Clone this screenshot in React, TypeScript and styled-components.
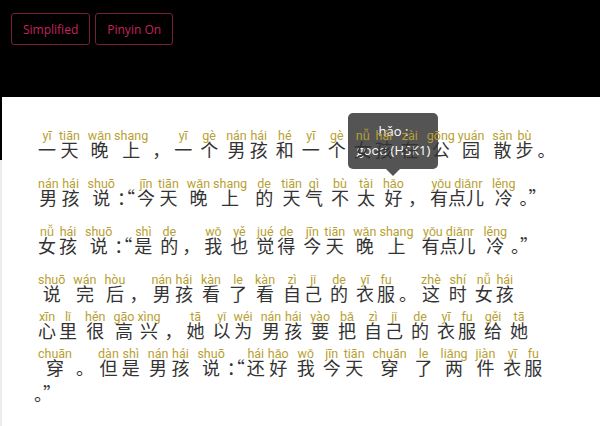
import React from "react";
import styled, { createGlobalStyle } from "styled-components";

const GlobalStyle = createGlobalStyle`
  html, body {
    margin: 0;
    padding: 0;
  }
  body {
    background: #000;
    overflow: hidden;
    font-family: "Noto Sans", sans-serif;
  }
`;

const Page = styled.div`
  width: 600px;
  height: 426px;
  display: flex;
  flex-direction: column;
  background: linear-gradient(to bottom, #000 0, #000 160px, #ececec 160px);
`;

const Header = styled.div`
  height: 97px;
  box-sizing: border-box;
  padding: 13px 11px;
  display: flex;
  align-items: flex-start;
  gap: 5px;
  background: #000;
`;

const ToggleButton = styled.button`
  height: 32px;
  padding: 0 11px;
  background: transparent;
  border: 1px solid #7a1c3c;
  border-radius: 3px;
  color: #c8225c;
  font-family: "Open Sans", "Noto Sans", sans-serif;
  font-size: 12px;
  cursor: pointer;
`;

const Reader = styled.div`
  flex: 1;
  margin-left: 2px;
  background: #fff;
  padding: 32px 20px 0 32px;
`;

const Paragraph = styled.div`
  display: flex;
  flex-wrap: wrap;
  align-items: flex-end;
  margin-bottom: 11px;
`;

const LineBreak = styled.span`
  flex-basis: 100%;
  height: 0;
`;

const Word = styled.span`
  display: inline-flex;
  gap: 3px;
  margin: 0 4px;
`;

const Syllable = styled.span`
  position: relative;
  display: inline-flex;
  flex-direction: column;
  align-items: center;
  min-width: 18px;
  padding-bottom: 8px;
`;

const Pinyin = styled.span`
  position: relative;
  z-index: 1;
  font-family: Roboto, "Liberation Sans", sans-serif;
  font-size: 12.5px;
  line-height: 13px;
  color: #b89f33;
  white-space: nowrap;
`;

const Hanzi = styled.span`
  position: relative;
  z-index: 1;
  margin-top: -2px;
  font-family: "Noto Sans CJK SC", sans-serif;
  font-size: 18px;
  line-height: 18px;
  color: #333;
  white-space: nowrap;
`;

const Punct = styled(Hanzi)<{ $narrow?: boolean }>`
  margin: 0 ${(p) => (p.$narrow ? "-2px" : "0")} 8px;
  font-feature-settings: ${(p) => (p.$narrow ? '"halt"' : "normal")};
`;

const Tooltip = styled.span`
  position: absolute;
  z-index: 0;
  bottom: calc(100% + 8px);
  left: 50%;
  transform: translateX(-50%);
  width: 90px;
  box-sizing: border-box;
  padding: 9px 0;
  background: #545454;
  border-radius: 5px;
  color: #fff;
  font-family: "Open Sans", "Noto Sans", sans-serif;
  font-size: 13px;
  line-height: 19px;
  text-align: center;

  &::after {
    content: "";
    position: absolute;
    top: 100%;
    left: 50%;
    margin-left: -7px;
    border-left: 7px solid transparent;
    border-right: 7px solid transparent;
    border-top: 7px solid #545454;
  }
`;

type Token = string | { hz: string; py: string; tip?: string };

const w = (hz: string, py: string, tip?: string): Token => ({ hz, py, tip });

// "\n" marks where the reference wraps a long paragraph
const paragraphs: Token[][] = [
  [
    w("一天", "yī tiān"), w("晚上", "wǎn shang"), "，", w("一", "yī"), w("个", "gè"),
    w("男孩", "nán hái"), w("和", "hé"), w("一", "yī"), w("个", "gè"), w("女孩", "nǚ hái"),
    w("在", "zài"), w("公园", "gōng yuán"), w("散步", "sàn bù"), "。",
  ],
  [
    w("男孩", "nán hái"), w("说", "shuō"), "：“", w("今天", "jīn tiān"), w("晚上", "wǎn shang"),
    w("的", "de"), w("天气", "tiān qì"), w("不", "bù"), w("太", "tài"),
    w("好", "hǎo", "good (HSK1)"), "，", w("有点儿", "yǒu diǎnr"), w("冷", "lěng"), "。”",
  ],
  [
    w("女孩", "nǚ hái"), w("说", "shuō"), "：“", w("是", "shì"), w("的", "de"), "，",
    w("我", "wǒ"), w("也", "yě"), w("觉得", "jué de"), w("今天", "jīn tiān"), w("晚上", "wǎn shang"),
    w("有点儿", "yǒu diǎnr"), w("冷", "lěng"), "。”",
  ],
  [
    w("说", "shuō"), w("完", "wán"), w("后", "hòu"), "，", w("男孩", "nán hái"), w("看", "kàn"),
    w("了", "le"), w("看", "kàn"), w("自己", "zì jǐ"), w("的", "de"), w("衣服", "yī fu"), "。",
    w("这", "zhè"), w("时", "shí"), w("女孩", "nǚ hái"), "\n", w("心里", "xīn lǐ"), w("很", "hěn"),
    w("高兴", "gāo xìng"), "，", w("她", "tā"), w("以为", "yǐ wéi"), w("男孩", "nán hái"),
    w("要", "yào"), w("把", "bǎ"), w("自己", "zì jǐ"), w("的", "de"), w("衣服", "yī fu"),
    w("给", "gěi"), w("她", "tā"), "\n", w("穿", "chuān"), "。", w("但是", "dàn shì"),
    w("男孩", "nán hái"), w("说", "shuō"), "：“", w("还好", "hái hǎo"), w("我", "wǒ"),
    w("今天", "jīn tiān"), w("穿", "chuān"), w("了", "le"), w("两", "liǎng"), w("件", "jiàn"),
    w("衣服", "yī fu"), "\n", "。”",
  ],
];

function WordView({ hz, py, tip }: { hz: string; py: string; tip?: string }) {
  const syllables = py.split(" ");
  const chars = Array.from(hz);
  // one column per character when the syllables line up, else the whole word
  const columns =
    syllables.length === chars.length
      ? chars.map((c, i) => ({ c, p: syllables[i] }))
      : [{ c: hz, p: py }];

  return (
    <Word>
      {columns.map((col, i) => (
        <Syllable key={i}>
          {tip && (
            <Tooltip>
              {py} :
              <br />
              {tip}
            </Tooltip>
          )}
          <Pinyin>{col.p}</Pinyin>
          <Hanzi>{col.c}</Hanzi>
        </Syllable>
      ))}
    </Word>
  );
}

export default function App() {
  return (
    <>
      <GlobalStyle />
      <Page>
        <Header>
          <ToggleButton>Simplified</ToggleButton>
          <ToggleButton>Pinyin On</ToggleButton>
        </Header>
        <Reader>
          {paragraphs.map((tokens, pi) => (
            <Paragraph key={pi}>
              {tokens.map((t, ti) => {
                if (t === "\n") return <LineBreak key={ti} />;
                if (typeof t === "string")
                  return (
                    <Punct key={ti} $narrow={t === "：“"}>
                      {t}
                    </Punct>
                  );
                return <WordView key={ti} hz={t.hz} py={t.py} tip={t.tip} />;
              })}
            </Paragraph>
          ))}
        </Reader>
      </Page>
    </>
  );
}
